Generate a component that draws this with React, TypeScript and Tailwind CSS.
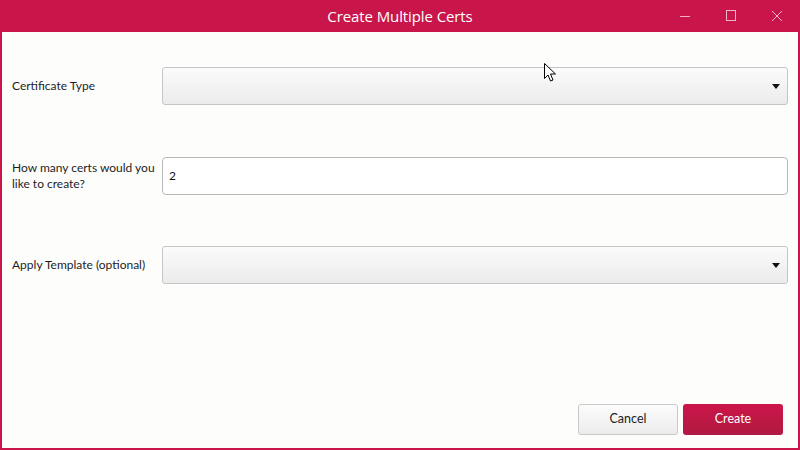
export default function App() {
  const font = { fontFamily: '"Open Sans", "Noto Sans", sans-serif' }
  const labelFont = { fontFamily: 'Lato, "Open Sans", sans-serif' }
  return (
    <div
      className="w-[800px] h-[450px] bg-[#c9164a] flex flex-col relative overflow-hidden"
      style={font}
    >
      <div className="h-[32px] flex items-center justify-center relative shrink-0">
        <span className="text-white text-[15px] tracking-[-0.1px]">Create Multiple Certs</span>
        <div className="absolute right-0 top-0 h-[32px] flex">
          <div className="w-[46px] h-[32px] flex items-center justify-center">
            <svg width="12" height="12" viewBox="0 0 12 12">
              <path d="M1 6.5h10" stroke="#f3b3c5" strokeWidth="1" />
            </svg>
          </div>
          <div className="w-[46px] h-[32px] flex items-center justify-center">
            <svg width="12" height="12" viewBox="0 0 12 12">
              <rect x="1.5" y="0.5" width="9" height="10" fill="none" stroke="#f3b3c5" strokeWidth="1" />
            </svg>
          </div>
          <div className="w-[46px] h-[32px] flex items-center justify-center">
            <svg width="12" height="12" viewBox="0 0 12 12">
              <path d="M1 1l10 10M11 1L1 11" stroke="#f3b3c5" strokeWidth="1" />
            </svg>
          </div>
        </div>
      </div>
      <div className="flex-1 mx-[2px] mb-[2px] bg-[#fdfdfc] flex flex-col px-[10px] pt-[35px] pb-[13px]">
        <div className="flex flex-col gap-[52px]" style={labelFont}>
          <div className="flex items-center h-[38px]">
            <div className="w-[150px] text-[12px] text-[#1e1e1e]">Certificate Type</div>
            <div className="flex-1 h-[38px] rounded-[3px] border border-[#c5c5c5] bg-gradient-to-b from-[#fbfbfb] to-[#ebebeb] flex items-center justify-end pr-[7px]">
              <svg width="8" height="5" viewBox="0 0 8 5">
                <path d="M0 0h8L4 5z" fill="#111" />
              </svg>
            </div>
          </div>
          <div className="flex items-center h-[38px]">
            <div className="w-[150px] text-[12px] leading-[16px] text-[#1e1e1e]">
              How many certs would you like to create?
            </div>
            <div className="flex-1 h-[38px] rounded-[4px] border border-[#b8b8b8] bg-white flex items-center pl-[6px] text-[12px] text-[#111]">
              2
            </div>
          </div>
          <div className="flex items-center h-[38px] -mt-[1px]">
            <div className="w-[150px] text-[12px] text-[#1e1e1e]">Apply Template (optional)</div>
            <div className="flex-1 h-[38px] rounded-[3px] border border-[#c5c5c5] bg-gradient-to-b from-[#fbfbfb] to-[#ebebeb] flex items-center justify-end pr-[7px]">
              <svg width="8" height="5" viewBox="0 0 8 5">
                <path d="M0 0h8L4 5z" fill="#111" />
              </svg>
            </div>
          </div>
        </div>
        <div className="flex-1" />
        <div className="flex justify-end gap-[5px] pr-[5px]" style={labelFont}>
          <button className="w-[100px] h-[31px] rounded-[3px] border border-[#c8c8c8] bg-gradient-to-b from-[#fcfcfc] to-[#ececec] text-[12.5px] text-[#222]">
            Cancel
          </button>
          <button className="w-[100px] h-[31px] rounded-[3px] bg-gradient-to-b from-[#cc1549] to-[#b01a42] text-[12.5px] text-white">
            Create
          </button>
        </div>
      </div>
      <svg className="absolute left-[544px] top-[63px]" width="13" height="19" viewBox="0 0 13 19">
        <path d="M0.5 0.5v15l3.5-3.5 2.5 6 2.5-1-2.5-6h5z" fill="#fff" stroke="#000" strokeWidth="1" strokeLinejoin="round" />
      </svg>
    </div>
  )
}
